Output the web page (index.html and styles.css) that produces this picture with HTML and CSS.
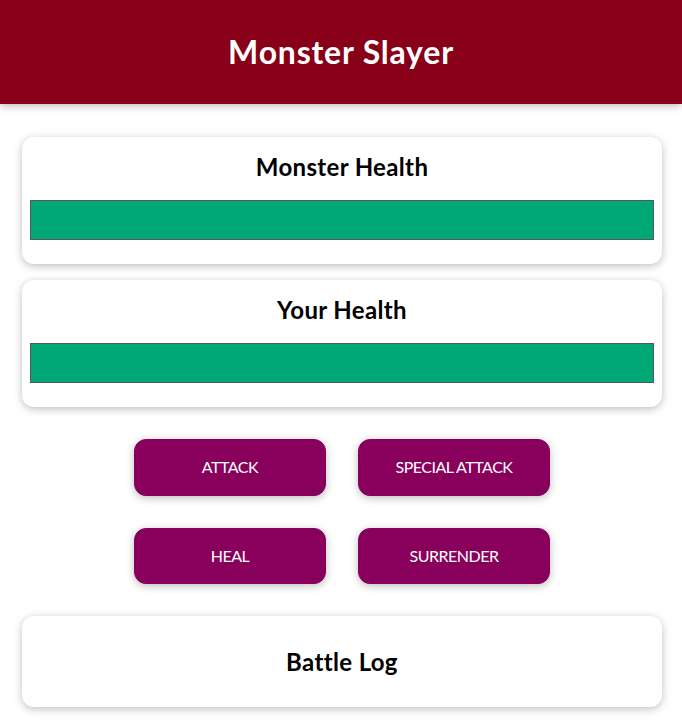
FILE: index.html
```html
<!doctype html>
<html lang="en">
<head>
<meta charset="utf-8" />
<title>Monster Slayer</title>
<link rel="stylesheet" href="styles.css">
</head>
<body>
  <header>
    <h1>Monster Slayer</h1>
  </header>
  <main class="game">
    <section id="monster" class="container">
      <h2>Monster Health</h2>
      <div class="healthbar">
        <div class="healthbar__value" style="width: 100%"></div>
      </div>
    </section>
    <section id="player" class="container">
      <h2>Your Health</h2>
      <div class="healthbar">
        <div class="healthbar__value" style="width: 100%"></div>
      </div>
    </section>
    <section id="controls">
      <button>ATTACK</button>
      <button>SPECIAL ATTACK</button>
      <button>HEAL</button>
      <button>SURRENDER</button>
    </section>
    <section id="log" class="container">
      <h2>Battle Log</h2>
    </section>
  </main>
</body>
</html>
```

FILE: styles.css
```css
* {
  box-sizing: border-box;
}

html {
  font-family: 'Lato', 'Liberation Sans', sans-serif;
}

body {
  margin: 0;
}

header {
  margin: 0 0 1rem 0;
  padding: 0.5rem;
  background-color: #880017;
  color: white;
  text-align: center;
  box-shadow: 0 2px 8px rgba(0, 0, 0, 0.26);
}

header h1 {
  margin: 21px 0;
  font-size: 2rem;
  line-height: 46px;
  letter-spacing: 0.8px;
}

.game {
  padding: 1px 0 0 2px;
}

section {
  width: 40rem;
  max-width: 100%;
  margin: auto;
}

h2 {
  font-size: 1.5rem;
  line-height: 35px;
  letter-spacing: 0.35px;
}

.healthbar {
  width: 100%;
  height: 40px;
  border: 1px solid #575757;
  margin: 1rem 0;
  background: #fde5e5;
}

.healthbar__value {
  background-color: #00a876;
  width: 100%;
  height: 100%;
}

.container {
  text-align: center;
  padding: 0.5rem;
  margin: 1rem auto;
  box-shadow: 0 2px 8px rgba(0, 0, 0, 0.26);
  border-radius: 12px;
}

#monster h2,
#player h2 {
  margin: 0.25rem;
}

#log h2 {
  margin: 20px 0;
}

#controls {
  display: flex;
  justify-content: center;
  flex-wrap: wrap;
}

button {
  font: inherit;
  font-size: 1rem;
  line-height: 22.5px;
  letter-spacing: -0.5px;
  border: 1px solid #88005b;
  background-color: #88005b;
  color: white;
  padding: 1rem 2rem;
  border-radius: 12px;
  margin: 1rem;
  width: 12rem;
  cursor: pointer;
  box-shadow: 0 2px 8px rgba(0, 0, 0, 0.26);
}
```
